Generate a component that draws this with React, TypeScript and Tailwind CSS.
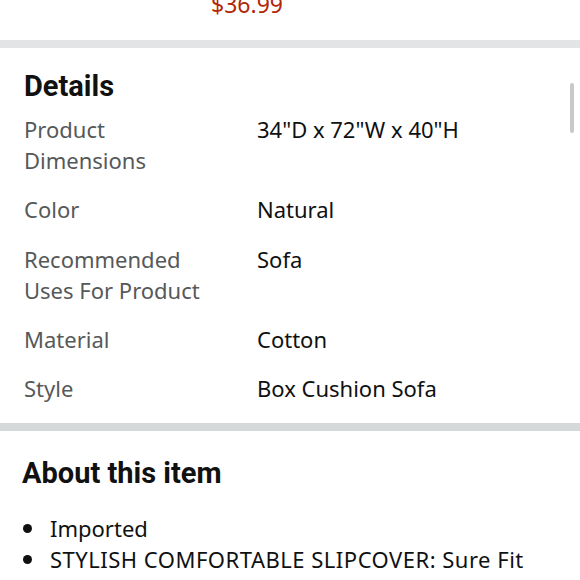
const details: [string, string][] = [
  ["Product Dimensions", "34\"D x 72\"W x 40\"H"],
  ["Color", "Natural"],
  ["Recommended Uses For Product", "Sofa"],
  ["Material", "Cotton"],
  ["Style", "Box Cushion Sofa"],
];

export default function App() {
  return (
    <div
      className="w-[580px] h-[580px] overflow-hidden bg-white relative"
      style={{ fontFamily: '"Noto Sans", sans-serif' }}
    >
      {/* price tail */}
      <div className="h-[40px] relative">
        <div className="absolute left-[211px] top-[-10px] text-[23px] leading-[28px] text-[#b12704]">
          $36.99
        </div>
      </div>
      <div className="h-[8px] bg-[#e3e4e6]" />

      {/* Details */}
      <div className="relative pl-[24px] pr-[24px] pt-[21px] pb-[19px]">
        <div className="absolute right-[6px] top-[35px] w-[4px] h-[50px] rounded-full bg-[#c8c9cb]" />
        <h2
          className="text-[29px] leading-[34px] font-bold text-[#111]"
          style={{ fontFamily: "Roboto, sans-serif" }}
        >
          Details
        </h2>
        <div className="mt-[11px] flex flex-col gap-[18.3px]">
          {details.map(([k, v]) => (
            <div key={k} className="flex text-[22px] leading-[31px]">
              <div className="w-[233px] pr-[40px] text-[#565959]">{k}</div>
              <div className="text-[#0f1111]">{v}</div>
            </div>
          ))}
        </div>
      </div>
      <div className="h-[8px] bg-[#d5d9d9]" />

      {/* About */}
      <div className="pl-[22px] pt-[25px]">
        <h2
          className="text-[29px] leading-[34px] font-bold text-[#111]"
          style={{ fontFamily: "Roboto, sans-serif" }}
        >
          About this item
        </h2>
        <ul className="mt-[23px] text-[22px] leading-[31px] text-[#0f1111]">
          {["Imported", "STYLISH COMFORTABLE SLIPCOVER: Sure Fit"].map((t, i) => (
            <li key={t} className="flex items-center">
              <span className="w-[9px] h-[9px] rounded-full bg-[#0f1111] ml-[1px] mr-[18px]" />
              <span className={i === 1 ? "whitespace-nowrap tracking-[0.5px]" : "whitespace-nowrap"}>{t}</span>
            </li>
          ))}
        </ul>
      </div>
    </div>
  );
}
